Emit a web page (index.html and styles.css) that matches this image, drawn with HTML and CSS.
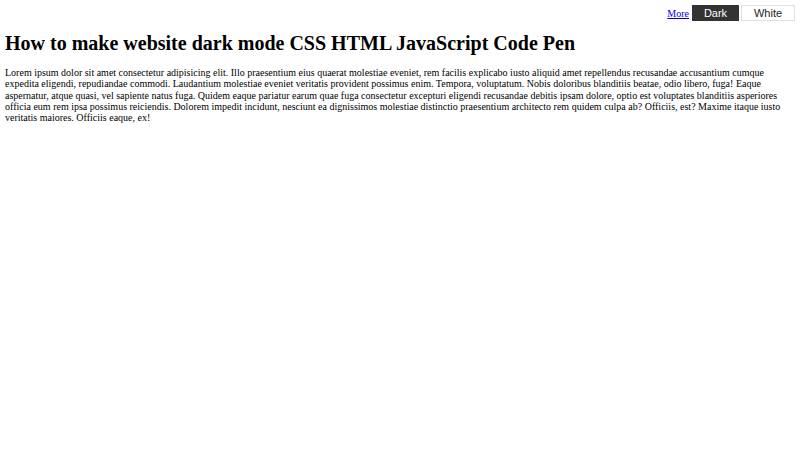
FILE: index.html
```html
<!DOCTYPE html>
<html lang="en">
<head>
<meta charset="utf-8">
<title>Dark mode</title>
<link rel="stylesheet" href="styles.css">
</head>
<body>
<div class="bar">
  <a href="#" class="more">More</a>
  <button class="btn btn-dark">Dark</button>
  <button class="btn btn-white">White</button>
</div>
<h1 class="title">How to make website dark mode CSS HTML JavaScript Code Pen</h1>
<p class="text">Lorem ipsum dolor sit amet consectetur adipisicing elit. Illo praesentium eius quaerat molestiae eveniet, rem facilis explicabo iusto aliquid amet repellendus recusandae accusantium cumque expedita eligendi, repudiandae commodi. Laudantium molestiae eveniet veritatis provident possimus enim. Tempora, voluptatum. Nobis doloribus blanditiis beatae, odio libero, fuga! Eaque aspernatur, atque quasi, vel sapiente natus fuga. Quidem eaque pariatur earum quae fuga consectetur excepturi eligendi recusandae debitis ipsam dolore, optio est voluptates blanditiis asperiores officia eum rem ipsa possimus reiciendis. Dolorem impedit incidunt, nesciunt ea dignissimos molestiae distinctio praesentium architecto rem quidem culpa ab? Officiis, est? Maxime itaque iusto veritatis maiores. Officiis eaque, ex!</p>
</body>
</html>
```

FILE: styles.css
```css
html, body {
  background: #fff;
  color: #000;
}
body {
  margin: 5px;
  font-family: "Liberation Serif", "Times New Roman", serif;
}
.bar {
  display: flex;
  justify-content: flex-end;
  align-items: center;
  gap: 2px;
  height: 16px;
}
.more {
  color: #0000ee;
  font-size: 10px;
  margin-right: 1px;
}
.btn {
  font-family: "Liberation Sans", Arial, sans-serif;
  font-size: 11px;
  height: 16px;
  padding: 0;
  border-radius: 0;
  margin: 0;
}
.btn-dark {
  width: 47px;
  background: #333;
  color: #fff;
  border: 1px solid #333;
}
.btn-white {
  width: 54px;
  background: #fff;
  color: #222;
  border: 1px solid #e0e0e0;
}
.title {
  font-size: 20px;
  font-weight: bold;
  margin: 11px 0 12px;
  line-height: 23px;
}
.text {
  font-size: 10px;
  line-height: 11.3px;
  margin: 0;
}
```
